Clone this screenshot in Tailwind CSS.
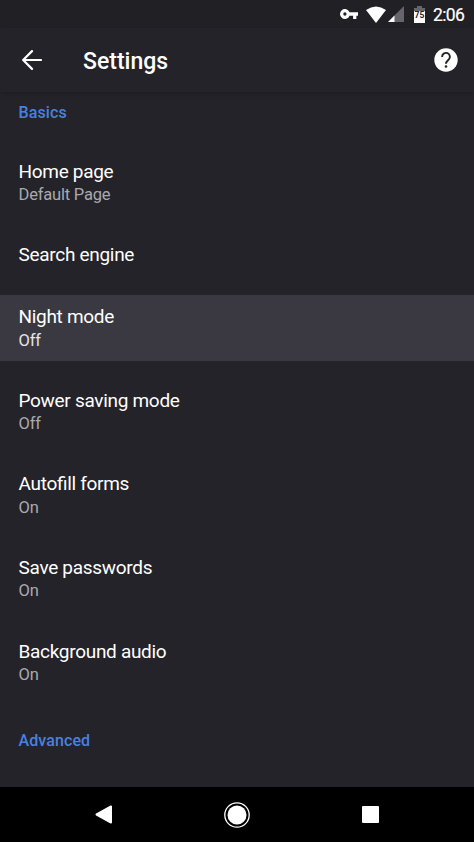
<!DOCTYPE html>
<html lang="en"><head><meta charset="utf-8"><title>Settings</title>
<script src="https://cdn.jsdelivr.net/npm/@tailwindcss/browser@4"></script></head>
<body class="bg-black">
<div class="w-[474px] h-[842px] overflow-hidden flex flex-col bg-[#242329] text-white font-['Roboto',sans-serif]">
<div class="h-7 shrink-0 bg-[#212025] flex items-center justify-end pr-[9px]">
<svg class="w-[18px] h-[10px] mr-[8px]" viewBox="1 6 22 12" preserveAspectRatio="none" fill="#fff"><path d="M12.650 10A6 6 0 1 0 12.650 14H17v4h4v-4h2v-4zM7 14a2 2 0 1 1 0-4 2 2 0 0 1 0 4z"/></svg>
<svg class="w-[20px] h-[17px] mr-[2px]" viewBox="0 0 20 17" fill="#fff"><path d="M0 4Q10-3 20 4L10 17z"/></svg>
<svg class="w-[16px] h-[16px] mr-[10px]" viewBox="0 0 16 16"><path d="M16 0v16H0z" fill="#66656a"/><path d="M6.500 9.500V16H0z" fill="#fff"/></svg>
<svg class="w-[11px] h-[17px] mr-[8px]" viewBox="0 0 11 17"><path d="M3 0h5v2h3v3H0V2h3z" fill="#66656a"/><path d="M0 5h11v12H0z" fill="#fff"/><text x="5.500" y="12" font-size="8.500" text-anchor="middle" font-weight="700" fill="#242329">75</text></svg>
<span class="text-[17.500px] leading-7 w-[32px] pt-px whitespace-nowrap tracking-[-0.600px] [-webkit-text-stroke:0.2px_white]">2:06</span>
</div>
<header class="h-16 shrink-0 bg-[#242329] shadow-md flex items-center pl-[22px] pr-[16px]">
<svg class="w-5 h-5" viewBox="4 4 16 16" fill="none" stroke="#fff" stroke-width="1.700" stroke-linecap="round" stroke-linejoin="round"><path d="M19.200 12H5.300M12 4.900 4.900 12l7.100 7.100"/></svg>
<h1 class="ml-[41px] mt-[5px] text-[23px] font-medium flex-1">Settings</h1>
<svg class="w-6 h-6" viewBox="0 0 24 24"><circle cx="12" cy="12" r="11.700" fill="#fff"/><path d="M8.100 9a3.900 3.900 0 1 1 6.500 2.700C13 13.200 12 13.800 12 15.800" fill="none" stroke="#242329" stroke-width="1.900"/><circle cx="12" cy="18.500" r="1.300" fill="#242329"/></svg>
</header>
<main class="flex-1 flex flex-col">
<h2 class="h-[57.500px] shrink-0 pt-[9px] pl-[18.500px] text-[16px] leading-6 font-medium text-[#4a80e2] tracking-[0.1px]">Basics</h2>
<ul class="flex flex-col gap-[17.500px] text-[19px] leading-6 tracking-[-0.300px] [font-feature-settings:'liga'_1]">
<li class="h-[66px] pl-[18.500px] pt-[10px]">Home page<p class="text-[16.500px] leading-[22px] tracking-[-0.200px] text-[#aaa9ae]">Default Page</p></li>
<li class="h-[44px] pl-[18.500px] pt-[10px]">Search engine</li>
<li class="h-[66px] pl-[18.500px] pt-[10px] bg-[#3a3942]">Night mode<p class="text-[16.500px] leading-[22px] tracking-[-0.200px] pt-px text-[#e5e4e8]">Off</p></li>
<li class="h-[66px] pl-[18.500px] pt-[10.700px]">Power saving mode<p class="text-[16.500px] leading-[22px] tracking-[-0.200px] text-[#aaa9ae]">Off</p></li>
<li class="h-[66px] pl-[18.500px] pt-[10.500px]">Autofill forms<p class="text-[16.500px] leading-[22px] tracking-[-0.200px] pt-px text-[#aaa9ae]">On</p></li>
<li class="h-[66px] pl-[18.500px] pt-[10.700px]">Save passwords<p class="text-[16.500px] leading-[22px] tracking-[-0.200px] text-[#aaa9ae]">On</p></li>
<li class="h-[66px] pl-[18.500px] pt-[11px]">Background audio<p class="text-[16.500px] leading-[22px] tracking-[-0.200px] text-[#aaa9ae]">On</p></li>
</ul>
<h2 class="pt-[34px] pl-[18.500px] text-[16px] leading-6 font-medium text-[#4a80e2] tracking-[0.1px]">Advanced</h2>
</main>
<nav class="h-[55px] shrink-0 bg-black flex items-center justify-between pl-[95px] pr-[95px]">
<svg class="w-[17px] h-[19px]" viewBox="0 0 17 19" fill="#fff" stroke="#fff" stroke-linejoin="round" stroke-width="2"><path d="M1.500 9.500 16 1.500v16z"/></svg>
<svg class="w-[26px] h-[26px]" viewBox="0 0 26 26" fill="#fff"><circle cx="13" cy="13" r="9.500"/><circle cx="13" cy="13" r="12.200" fill="none" stroke="#fff" stroke-width="1.300"/></svg>
<div class="w-[17px] h-[17px] rounded-[1px] bg-white"></div>
</nav>
</div></body></html>
